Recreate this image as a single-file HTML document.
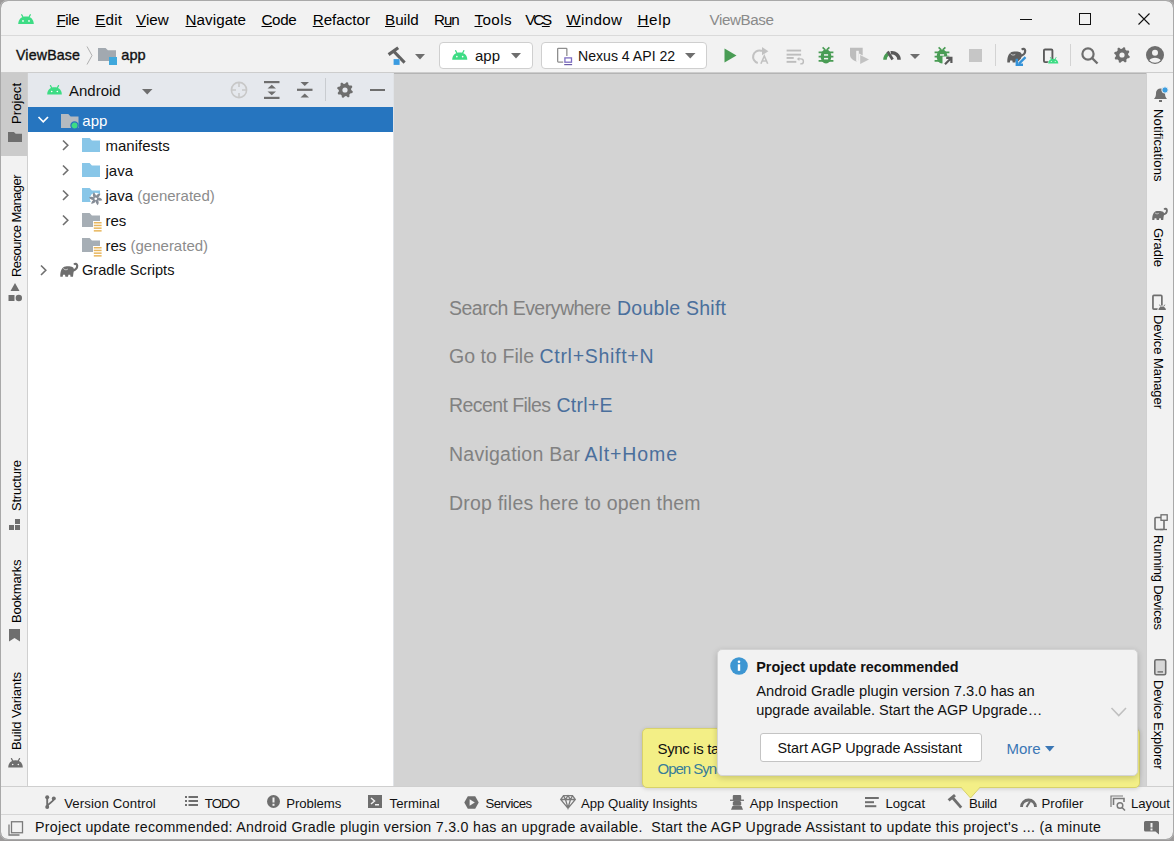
<!DOCTYPE html>
<html><head><meta charset="utf-8">
<style>
*{margin:0;padding:0;box-sizing:border-box}
html,body{width:1174px;height:841px;overflow:hidden;background:#9c9a9a}
body{font-family:"Liberation Sans",sans-serif;color:#000;position:relative}
.a{position:absolute}
.t{position:absolute;white-space:nowrap;line-height:1}
svg{position:absolute;overflow:visible}
#win{position:absolute;left:0;top:0;width:1174px;height:840px;background:#f2f2f2;border-radius:8px;overflow:hidden;box-shadow:inset 0 0 0 1px #a9a9a9}
u{text-decoration:underline;text-decoration-thickness:1px;text-underline-offset:1px}
</style></head><body>
<div id="win">
<div class="a" style="left:0px;top:35px;width:1174px;height:1px;background:#dadada;"></div>
<svg style="left:18px;top:14px" width="16" height="10.0" viewBox="0 0 16 10"><path d="M0.2 10 C0.4 4.9 3.6 2.5 8 2.5 C12.4 2.5 15.6 4.9 15.8 10 Z" fill="#3ddc84"/><path d="M3.7 0.7 L5.3 3.6 M12.3 0.7 L10.7 3.6" stroke="#3ddc84" stroke-width="1.3" stroke-linecap="round"/><circle cx="5" cy="6.9" r="0.85" fill="#fff"/><circle cx="11" cy="6.9" r="0.85" fill="#fff"/></svg>
<div class="t" style="left:56.400000000000006px;top:11.93px;font-size:15.2px;color:#000;font-weight:normal;letter-spacing:-0.391px;"><u>F</u>ile</div>
<div class="t" style="left:95.2px;top:11.93px;font-size:15.2px;color:#000;font-weight:normal;letter-spacing:0.210px;"><u>E</u>dit</div>
<div class="t" style="left:136.1px;top:11.93px;font-size:15.2px;color:#000;font-weight:normal;letter-spacing:0.019px;"><u>V</u>iew</div>
<div class="t" style="left:185.5px;top:11.93px;font-size:15.2px;color:#000;font-weight:normal;letter-spacing:0.080px;"><u>N</u>avigate</div>
<div class="t" style="left:261.5px;top:11.93px;font-size:15.2px;color:#000;font-weight:normal;letter-spacing:-0.369px;"><u>C</u>ode</div>
<div class="t" style="left:312.7px;top:11.93px;font-size:15.2px;color:#000;font-weight:normal;letter-spacing:0.000px;"><u>R</u>efactor</div>
<div class="t" style="left:385.0px;top:11.93px;font-size:15.2px;color:#000;font-weight:normal;letter-spacing:-0.018px;"><u>B</u>uild</div>
<div class="t" style="left:434.0px;top:11.93px;font-size:15.2px;color:#000;font-weight:normal;letter-spacing:-1.031px;">R<u>u</u>n</div>
<div class="t" style="left:474.5px;top:11.93px;font-size:15.2px;color:#000;font-weight:normal;letter-spacing:0.387px;"><u>T</u>ools</div>
<div class="t" style="left:525.3000000000001px;top:11.93px;font-size:15.2px;color:#000;font-weight:normal;letter-spacing:-2.264px;">VC<u>S</u></div>
<div class="t" style="left:566.3000000000001px;top:11.93px;font-size:15.2px;color:#000;font-weight:normal;letter-spacing:0.317px;"><u>W</u>indow</div>
<div class="t" style="left:637.4000000000001px;top:11.93px;font-size:15.2px;color:#000;font-weight:normal;letter-spacing:0.722px;"><u>H</u>elp</div>
<div class="t" style="left:709.5px;top:11.93px;font-size:15.2px;color:#8a8a8a;font-weight:normal;letter-spacing:-0.394px;">ViewBase</div>
<div class="a" style="left:1020px;top:19px;width:12px;height:1px;background:#111;"></div>
<div class="a" style="left:1079px;top:13px;width:12px;height:12px;border:1px solid #111"></div>
<svg style="left:1138px;top:13px" width="12" height="12" viewBox="0 0 12 12"><path d="M0.5 0.5 L11.5 11.5 M11.5 0.5 L0.5 11.5" stroke="#111" stroke-width="1.1"/></svg>
<div class="a" style="left:0px;top:72px;width:1174px;height:1px;background:#cdcdcd;"></div>
<div class="t" style="left:16px;top:48.48px;font-size:14.2px;color:#111;font-weight:normal;letter-spacing:0.167px;-webkit-text-stroke:0.35px #111;">ViewBase</div>
<svg style="left:86px;top:46px" width="7" height="19" viewBox="0 0 7 19"><path d="M1 0.5 L6 9.5 L1 18.5" fill="none" stroke="#b0b0b0" stroke-width="1"/></svg>
<svg style="left:98px;top:47.5px" width="18" height="13" viewBox="0 0 18 13"><path d="M0 0 H7.6 L9.9 2.3 H18 V13 H0 Z" fill="#a2a9b0"/></svg>
<div class="a" style="left:109px;top:57px;width:8px;height:8px;background:#40a8dc;"></div>
<div class="t" style="left:121.3px;top:48.14px;font-size:14.6px;color:#111;font-weight:normal;letter-spacing:0.000px;-webkit-text-stroke:0.35px #111;">app</div>
<svg style="left:387px;top:46px" width="19" height="19" viewBox="0 0 19 19"><path d="M1.6 8.6 L11.2 1.8" stroke="#616161" stroke-width="3.2"/><path d="M6.8 5.4 L17.6 16.6" stroke="#616161" stroke-width="3"/><rect x="6.2" y="12.9" width="6.5" height="6" fill="#f2f2f2"/><rect x="6.6" y="13.1" width="6" height="5.8" fill="#3a9be0"/></svg>
<svg style="left:415px;top:53.5px" width="10" height="5.5" viewBox="0 0 10 5.5"><path d="M0 0 H10 L5.0 5.5 Z" fill="#6e6e6e"/></svg>
<div class="a" style="left:439px;top:42px;width:94px;height:27px;background:#fff;border:1px solid #cfcfcf;border-radius:4px"></div>
<svg style="left:452px;top:50px" width="15.5" height="9.6875" viewBox="0 0 16 10"><path d="M0.2 10 C0.4 4.9 3.6 2.5 8 2.5 C12.4 2.5 15.6 4.9 15.8 10 Z" fill="#3ddc84"/><path d="M3.7 0.7 L5.3 3.6 M12.3 0.7 L10.7 3.6" stroke="#3ddc84" stroke-width="1.3" stroke-linecap="round"/><circle cx="5" cy="6.9" r="0.85" fill="#fff"/><circle cx="11" cy="6.9" r="0.85" fill="#fff"/></svg>
<div class="t" style="left:475px;top:47.80px;font-size:15px;color:#111;font-weight:normal;letter-spacing:0.000px;">app</div>
<svg style="left:511px;top:52.5px" width="10" height="5.5" viewBox="0 0 10 5.5"><path d="M0 0 H10 L5.0 5.5 Z" fill="#6e6e6e"/></svg>
<div class="a" style="left:541px;top:42px;width:166px;height:27px;background:#fff;border:1px solid #cfcfcf;border-radius:4px"></div>
<svg style="left:556px;top:47px" width="17" height="18" viewBox="0 0 17 18"><rect x="1.65" y="1.3" width="9.2" height="13.8" rx="0.8" fill="none" stroke="#8e8e8e" stroke-width="1.3"/><rect x="7.2" y="9" width="10" height="9" fill="#ffffff"/><rect x="8.9" y="10.9" width="6.6" height="4.3" fill="#ffffff" stroke="#7d6dc2" stroke-width="1.3"/><rect x="8.2" y="17" width="7.9" height="1.2" fill="#6b5ca8"/></svg>
<div class="t" style="left:578px;top:48.56px;font-size:14.1px;color:#111;font-weight:normal;letter-spacing:0.000px;">Nexus 4 API 22</div>
<svg style="left:684.5px;top:52.5px" width="10.5" height="5.5" viewBox="0 0 10.5 5.5"><path d="M0 0 H10.5 L5.25 5.5 Z" fill="#6e6e6e"/></svg>
<svg style="left:724px;top:48px" width="13" height="15" viewBox="0 0 13 15"><path d="M0.5 0.5 L12.5 7.5 L0.5 14.5 Z" fill="#499c54"/></svg>
<svg style="left:751px;top:47px" width="18" height="18" viewBox="0 0 18 18"><path d="M6.8 15.9 A6.3 6.3 0 0 1 10 3.7 H11.5" fill="none" stroke="#c2c2c2" stroke-width="2.1"/><path d="M11 0.1 L17.4 4.2 L11 8.2 Z" fill="#c2c2c2"/><path d="M9.9 16.8 L13.3 9 L16.7 16.8 M11.3 14 H15.3" fill="none" stroke="#c2c2c2" stroke-width="1.6"/></svg>
<svg style="left:786px;top:48.5px" width="19" height="16" viewBox="0 0 19 16"><rect x="0.6" y="0.6" width="14.5" height="1.9" fill="#bdbdbd"/><rect x="0.6" y="4.7" width="14.5" height="1.9" fill="#bdbdbd"/><rect x="0.6" y="8" width="7.1" height="1.9" fill="#bdbdbd"/><rect x="0.6" y="11.9" width="9.7" height="1.9" fill="#bdbdbd"/><path d="M12.6 9.9 H14.9 A2.5 2.5 0 0 1 14.9 14.9 H14.2" fill="none" stroke="#bdbdbd" stroke-width="1.4"/><path d="M10.8 9.9 L13.4 7.9 V11.9 Z" fill="#bdbdbd"/></svg>
<svg style="left:818px;top:47px" width="16" height="17" viewBox="0 0 16 17"><path d="M4.6 0.4 L7 2.6 M11.4 0.4 L9 2.6" stroke="#499c54" stroke-width="1.6"/><ellipse cx="8" cy="9.4" rx="5.3" ry="7.1" fill="#499c54"/><path d="M0.6 5.4 H15.4 M0.6 9.7 H15.4 M0.6 13.8 H15.4" stroke="#499c54" stroke-width="1.8"/><rect x="6" y="7.2" width="4.1" height="1.5" fill="#f2f2f2"/><rect x="6" y="10.9" width="4.1" height="1.5" fill="#f2f2f2"/></svg>
<svg style="left:849px;top:47px" width="20" height="17" viewBox="0 0 20 17"><path d="M1 0.7 H13.7 V8 C13.7 11 10.5 13.5 7.3 14.4 C4 13.5 1 11 1 8 Z" fill="#bdbdbd"/><rect x="7.2" y="3.8" width="2.6" height="10.5" fill="#f2f2f2"/><path d="M10 6.6 L21.5 12.5 L10 18.5 Z" fill="#f2f2f2"/><path d="M11.2 7.9 L20 12.5 L11.2 17 Z" fill="#c2c2c2"/></svg>
<svg style="left:882px;top:48px" width="20" height="12" viewBox="0 0 20 12"><path d="M2.95 11.8 A7.05 7.05 0 0 1 5.96 5.92" fill="none" stroke="#499c54" stroke-width="3.5"/><path d="M8.78 4.76 A7.05 7.05 0 0 1 17.05 11.8" fill="none" stroke="#5a5a5a" stroke-width="3.5"/><path d="M5.6 3.6 L10.6 11.4" stroke="#5a5a5a" stroke-width="2.8"/></svg>
<svg style="left:910px;top:53.8px" width="10" height="5" viewBox="0 0 10 5"><path d="M0 0 H10 L5.0 5 Z" fill="#6e6e6e"/></svg>
<svg style="left:933.5px;top:46.8px" width="19" height="18" viewBox="0 0 19 18"><path d="M4.6 0.4 L7 2.6 M11.4 0.4 L9 2.6" stroke="#499c54" stroke-width="1.6"/><ellipse cx="8" cy="9.4" rx="5.3" ry="7.1" fill="#499c54"/><path d="M0.6 5.4 H15.4 M0.6 9.7 H15.4 M0.6 13.8 H15.4" stroke="#499c54" stroke-width="1.8"/><rect x="6" y="7.2" width="4.1" height="1.5" fill="#f2f2f2"/><path d="M8.5 9.5 H19.5 V19 H8.5 Z" fill="#f2f2f2"/><path d="M11 17.2 L17 11.2 M12.2 10.8 H17.4 V16" fill="none" stroke="#5a5a5a" stroke-width="2.2"/></svg>
<div class="a" style="left:969px;top:49px;width:12.5px;height:12.5px;background:#c6c6c6;"></div>
<div class="a" style="left:995px;top:44px;width:1px;height:22px;background:#d3d3d3;"></div>
<svg style="left:1006.5px;top:48px" width="19" height="14.777777777777779" viewBox="0 0 18 14"><path d="M0.3 13.8 C0 8.5 1.8 4 5.5 3.5 C8 3.2 11 3.3 12.8 4.2 C13.8 4.8 14 6 13.8 8 L13.3 11 L13 13.8 L10.5 13.8 L10.2 11.8 L8.4 11.8 L8 13.8 L5.4 13.8 L5 11.8 L3 11.8 L2.7 13.8 Z" fill="#5f5f5f"/><path d="M12.5 7.6 C15.5 7.1 17.4 4.9 17.2 2.5 C17 0.6 15.2 0.2 14.1 1.7" fill="none" stroke="#5f5f5f" stroke-width="2.2"/><path d="M3.4 5.4 C4.4 6.9 6.4 7.1 7.8 6.1" fill="none" stroke="#f2f2f2" stroke-width="0.9" opacity="0.75"/></svg>
<svg style="left:1015px;top:56px" width="12" height="10" viewBox="0 0 12 10"><path d="M10.5 1 L3.5 8" stroke="#f2f2f2" stroke-width="4"/><path d="M10.5 1.2 L3.8 7.8" stroke="#3592d8" stroke-width="2.4"/><path d="M1.8 2.8 V8.8 H8" fill="none" stroke="#3592d8" stroke-width="2.4"/></svg>
<svg style="left:1042.5px;top:47.5px" width="16" height="17" viewBox="0 0 17 17"><rect x="1" y="1" width="9" height="13.5" rx="1.2" fill="none" stroke="#5a5a5a" stroke-width="2"/><path d="M4.6 17 C4.8 13.3 7.2 11.3 10.5 11.3 C13.8 11.3 16.2 13.3 16.4 17 Z" fill="#f2f2f2"/></svg>
<svg style="left:1047.5px;top:57px" width="10.5" height="6.5625" viewBox="0 0 16 10"><path d="M0.2 10 C0.4 4.9 3.6 2.5 8 2.5 C12.4 2.5 15.6 4.9 15.8 10 Z" fill="#3ddc84"/><path d="M3.7 0.7 L5.3 3.6 M12.3 0.7 L10.7 3.6" stroke="#3ddc84" stroke-width="1.3" stroke-linecap="round"/><circle cx="5" cy="6.9" r="0.85" fill="#fff"/><circle cx="11" cy="6.9" r="0.85" fill="#fff"/></svg>
<div class="a" style="left:1069.5px;top:44px;width:1px;height:22px;background:#d3d3d3;"></div>
<svg style="left:1081px;top:47px" width="18" height="17" viewBox="0 0 18 17"><circle cx="7" cy="7" r="5.6" fill="none" stroke="#6e6e6e" stroke-width="2.2"/><path d="M11 11 L16.5 16.5" stroke="#6e6e6e" stroke-width="2.4"/></svg>
<svg style="left:1114px;top:47px" width="16" height="16" viewBox="0 0 16 16"><polygon points="8.00,1.80 9.56,0.15 11.06,0.61 11.44,2.84 12.38,3.62 14.65,3.56 15.39,4.94 14.08,6.79 14.20,8.00 15.85,9.56 15.39,11.06 13.16,11.44 12.38,12.38 12.44,14.65 11.06,15.39 9.21,14.08 8.00,14.20 6.44,15.85 4.94,15.39 4.56,13.16 3.62,12.38 1.35,12.44 0.61,11.06 1.92,9.21 1.80,8.00 0.15,6.44 0.61,4.94 2.84,4.56 3.62,3.62 3.56,1.35 4.94,0.61 6.79,1.92" fill="#6e6e6e"/><circle cx="8" cy="8" r="2.6" fill="#f2f2f2"/></svg>
<svg style="left:1146px;top:46px" width="18" height="18" viewBox="0 0 18 18"><circle cx="9" cy="9" r="9" fill="#6e6e6e"/><circle cx="9" cy="6.8" r="3" fill="#f2f2f2"/><path d="M3.3 14.2 C5 10.8 13 10.8 14.7 14.2 A7.6 7.6 0 0 1 3.3 14.2 Z" fill="#f2f2f2"/></svg>
<div class="a" style="left:27px;top:73px;width:1px;height:713px;background:#d0d0d0;"></div>
<div class="a" style="left:0px;top:73px;width:27px;height:83px;background:#cbcbcb;"></div>
<div class="t" style="left:9.5px;top:124px;font-size:13px;color:#000;letter-spacing:0.090px;transform-origin:0 0;transform:rotate(-90deg)">Project</div>
<svg style="left:8px;top:131.5px" width="14" height="10" viewBox="0 0 14 10"><path d="M0 0 H5.9 L7.7 1.8 H14 V10 H0 Z" fill="#6e6e6e"/></svg>
<div class="t" style="left:9.5px;top:276.5px;font-size:13px;color:#000;letter-spacing:-0.537px;transform-origin:0 0;transform:rotate(-90deg)">Resource Manager</div>
<svg style="left:8px;top:283px" width="14" height="20" viewBox="0 0 14 20"><path d="M7 0 L11.5 8 H2.5 Z" fill="#6e6e6e"/><rect x="0.5" y="12" width="6" height="6" fill="#6e6e6e"/><circle cx="10.8" cy="15" r="3.2" fill="#6e6e6e"/></svg>
<div class="t" style="left:9.5px;top:511px;font-size:13px;color:#000;letter-spacing:-0.218px;transform-origin:0 0;transform:rotate(-90deg)">Structure</div>
<svg style="left:8px;top:518.5px" width="14" height="12" viewBox="0 0 14 12"><rect x="7" y="0" width="5" height="5" fill="#6e6e6e"/><rect x="1" y="6" width="5" height="5" fill="#6e6e6e"/><rect x="7" y="6" width="5" height="5" fill="#6e6e6e"/></svg>
<div class="t" style="left:9.5px;top:623px;font-size:13px;color:#000;letter-spacing:-0.190px;transform-origin:0 0;transform:rotate(-90deg)">Bookmarks</div>
<svg style="left:9px;top:629px" width="12" height="13" viewBox="0 0 12 13"><path d="M0 0 H11 V12.5 L5.5 9 L0 12.5 Z" fill="#6e6e6e"/></svg>
<div class="t" style="left:9.5px;top:750px;font-size:13px;color:#000;letter-spacing:-0.096px;transform-origin:0 0;transform:rotate(-90deg)">Build Variants</div>
<svg style="left:8px;top:758px" width="15" height="9.375" viewBox="0 0 16 10"><path d="M0.2 10 C0.4 4.9 3.6 2.5 8 2.5 C12.4 2.5 15.6 4.9 15.8 10 Z" fill="#6e6e6e"/><path d="M3.7 0.7 L5.3 3.6 M12.3 0.7 L10.7 3.6" stroke="#6e6e6e" stroke-width="1.3" stroke-linecap="round"/><circle cx="5" cy="6.9" r="0.85" fill="#f2f2f2"/><circle cx="11" cy="6.9" r="0.85" fill="#f2f2f2"/></svg>
<div class="a" style="left:28px;top:73px;width:365px;height:34px;background:#e5e8ed;"></div>
<div class="a" style="left:28px;top:107px;width:365px;height:679px;background:#ffffff;"></div>
<svg style="left:46.5px;top:85px" width="15" height="9.375" viewBox="0 0 16 10"><path d="M0.2 10 C0.4 4.9 3.6 2.5 8 2.5 C12.4 2.5 15.6 4.9 15.8 10 Z" fill="#3ddc84"/><path d="M3.7 0.7 L5.3 3.6 M12.3 0.7 L10.7 3.6" stroke="#3ddc84" stroke-width="1.3" stroke-linecap="round"/><circle cx="5" cy="6.9" r="0.85" fill="#fff"/><circle cx="11" cy="6.9" r="0.85" fill="#fff"/></svg>
<div class="t" style="left:69px;top:83.10px;font-size:15px;color:#111;font-weight:normal;letter-spacing:0.000px;">Android</div>
<svg style="left:142px;top:88.8px" width="10.5" height="5.5" viewBox="0 0 10.5 5.5"><path d="M0 0 H10.5 L5.25 5.5 Z" fill="#6e6e6e"/></svg>
<svg style="left:230px;top:81px" width="18" height="18" viewBox="0 0 18 18"><circle cx="9" cy="9" r="7.6" fill="none" stroke="#c8c8c8" stroke-width="1.6"/><path d="M9 1 V6 M9 12 V17 M1 9 H6 M12 9 H17" stroke="#c8c8c8" stroke-width="1.6"/></svg>
<svg style="left:263.5px;top:81px" width="15.5" height="18" viewBox="0 0 15.5 18"><rect x="0" y="0" width="15.5" height="2.2" fill="#6e6e6e"/><rect x="0" y="15.8" width="15.5" height="2.2" fill="#6e6e6e"/><path d="M3.5 7.5 L7.75 3.8 L12 7.5 Z M3.5 10.5 L7.75 14.2 L12 10.5 Z" fill="#6e6e6e"/></svg>
<svg style="left:296.5px;top:82px" width="15.5" height="15.5" viewBox="0 0 15.5 15.5"><path d="M3.5 0 L7.75 4 L12 0 Z M3.5 15.5 L7.75 11.5 L12 15.5 Z" fill="#6e6e6e"/><rect x="0" y="6.7" width="15.5" height="2.2" fill="#6e6e6e"/></svg>
<div class="a" style="left:324.5px;top:78px;width:1px;height:23px;background:#c9ccd0;"></div>
<svg style="left:337px;top:82px" width="16" height="16" viewBox="0 0 16 16"><polygon points="8.00,1.80 9.56,0.15 11.06,0.61 11.44,2.84 12.38,3.62 14.65,3.56 15.39,4.94 14.08,6.79 14.20,8.00 15.85,9.56 15.39,11.06 13.16,11.44 12.38,12.38 12.44,14.65 11.06,15.39 9.21,14.08 8.00,14.20 6.44,15.85 4.94,15.39 4.56,13.16 3.62,12.38 1.35,12.44 0.61,11.06 1.92,9.21 1.80,8.00 0.15,6.44 0.61,4.94 2.84,4.56 3.62,3.62 3.56,1.35 4.94,0.61 6.79,1.92" fill="#6e6e6e"/><circle cx="8" cy="8" r="2.6" fill="#e5e8ed"/></svg>
<div class="a" style="left:369.5px;top:89px;width:15px;height:2.4px;background:#6e6e6e;"></div>
<div class="a" style="left:28px;top:107px;width:365px;height:25px;background:#2675bf;"></div>
<svg style="left:38px;top:116px" width="10.5" height="6.3" viewBox="0 0 10.5 6.3"><path d="M0.5 1 L5.25 5.8 L10.0 1" fill="none" stroke="#ffffff" stroke-width="1.7"/></svg>
<svg style="left:60.5px;top:114px" width="17.5" height="14" viewBox="0 0 17.5 14"><path d="M0 0 H7.3 L9.6 2.5 H17.5 V14 H0 Z" fill="#b4bac0"/></svg>
<svg style="left:70px;top:120.5px" width="9" height="9" viewBox="0 0 9 9"><circle cx="4.5" cy="4.5" r="3.6" fill="#3ddc84" stroke="#2675bf" stroke-width="1.2"/></svg>
<div class="t" style="left:82.3px;top:112.50px;font-size:15px;color:#ffffff;font-weight:normal;letter-spacing:0.000px;">app</div>
<svg style="left:62px;top:139.5px" width="6.3" height="10.5" viewBox="0 0 6.3 10.5"><path d="M1 0.5 L5.8 5.25 L1 10.0" fill="none" stroke="#707070" stroke-width="1.6"/></svg>
<svg style="left:82px;top:137.5px" width="18" height="14" viewBox="0 0 18 14"><path d="M0 0 H7.6 L9.9 2.5 H18 V14 H0 Z" fill="#88c6e8"/></svg>
<div class="t" style="left:105.5px;top:138.00px;font-size:15px;color:#111;font-weight:normal;letter-spacing:0.000px;">manifests</div>
<svg style="left:62px;top:164.5px" width="6.3" height="10.5" viewBox="0 0 6.3 10.5"><path d="M1 0.5 L5.8 5.25 L1 10.0" fill="none" stroke="#707070" stroke-width="1.6"/></svg>
<svg style="left:82px;top:162.5px" width="18" height="14" viewBox="0 0 18 14"><path d="M0 0 H7.6 L9.9 2.5 H18 V14 H0 Z" fill="#88c6e8"/></svg>
<div class="t" style="left:105.5px;top:163.00px;font-size:15px;color:#111;font-weight:normal;letter-spacing:0.000px;">java</div>
<svg style="left:62px;top:189.5px" width="6.3" height="10.5" viewBox="0 0 6.3 10.5"><path d="M1 0.5 L5.8 5.25 L1 10.0" fill="none" stroke="#707070" stroke-width="1.6"/></svg>
<svg style="left:82px;top:187.5px" width="18" height="14" viewBox="0 0 18 14"><path d="M0 0 H7.6 L9.9 2.5 H18 V14 H0 Z" fill="#88c6e8"/></svg>
<svg style="left:89.8px;top:192.5px" width="11.5" height="11.5" viewBox="0 0 11.5 11.5"><circle cx="5.75" cy="5.75" r="5.9" fill="#ffffff"/><g transform="translate(5.75 5.75)"><path transform="rotate(0)" d="M-0.2 -1.6 C0.2 -3.8 2.2 -5.3 4.6 -4.9 C4.2 -3.3 3.4 -1.6 1.6 -0.4 Z" fill="#858c96"/><path transform="rotate(60)" d="M-0.2 -1.6 C0.2 -3.8 2.2 -5.3 4.6 -4.9 C4.2 -3.3 3.4 -1.6 1.6 -0.4 Z" fill="#858c96"/><path transform="rotate(120)" d="M-0.2 -1.6 C0.2 -3.8 2.2 -5.3 4.6 -4.9 C4.2 -3.3 3.4 -1.6 1.6 -0.4 Z" fill="#858c96"/><path transform="rotate(180)" d="M-0.2 -1.6 C0.2 -3.8 2.2 -5.3 4.6 -4.9 C4.2 -3.3 3.4 -1.6 1.6 -0.4 Z" fill="#858c96"/><path transform="rotate(240)" d="M-0.2 -1.6 C0.2 -3.8 2.2 -5.3 4.6 -4.9 C4.2 -3.3 3.4 -1.6 1.6 -0.4 Z" fill="#858c96"/><path transform="rotate(300)" d="M-0.2 -1.6 C0.2 -3.8 2.2 -5.3 4.6 -4.9 C4.2 -3.3 3.4 -1.6 1.6 -0.4 Z" fill="#858c96"/></g></svg>
<div class="t" style="left:105.5px;top:188.00px;font-size:15px;color:#111;font-weight:normal;letter-spacing:0.000px;">java<span style="color:#8c8c8c"> (generated)</span></div>
<svg style="left:62px;top:214.5px" width="6.3" height="10.5" viewBox="0 0 6.3 10.5"><path d="M1 0.5 L5.8 5.25 L1 10.0" fill="none" stroke="#707070" stroke-width="1.6"/></svg>
<svg style="left:82px;top:212.5px" width="18" height="14" viewBox="0 0 18 14"><path d="M0 0 H7.6 L9.9 2.5 H18 V14 H0 Z" fill="#a6aeb5"/></svg>
<svg style="left:92.5px;top:220.5px" width="9" height="11" viewBox="0 0 9 11"><rect x="0" y="0" width="9" height="11" fill="#ffffff"/><rect x="0.8" y="1" width="7.8" height="1.5" fill="#e8b65c"/><rect x="0.8" y="3.7" width="7.8" height="1.5" fill="#e8b65c"/><rect x="0.8" y="6.4" width="7.8" height="1.5" fill="#e8b65c"/><rect x="0.8" y="9.1" width="7.8" height="1.5" fill="#e8b65c"/></svg>
<div class="t" style="left:105.5px;top:213.00px;font-size:15px;color:#111;font-weight:normal;letter-spacing:0.000px;">res</div>
<svg style="left:82px;top:237.5px" width="18" height="14" viewBox="0 0 18 14"><path d="M0 0 H7.6 L9.9 2.5 H18 V14 H0 Z" fill="#a6aeb5"/></svg>
<svg style="left:92.5px;top:245.5px" width="9" height="11" viewBox="0 0 9 11"><rect x="0" y="0" width="9" height="11" fill="#ffffff"/><rect x="0.8" y="1" width="7.8" height="1.5" fill="#e8b65c"/><rect x="0.8" y="3.7" width="7.8" height="1.5" fill="#e8b65c"/><rect x="0.8" y="6.4" width="7.8" height="1.5" fill="#e8b65c"/><rect x="0.8" y="9.1" width="7.8" height="1.5" fill="#e8b65c"/></svg>
<div class="t" style="left:105.5px;top:238.00px;font-size:15px;color:#111;font-weight:normal;letter-spacing:0.000px;">res<span style="color:#8c8c8c"> (generated)</span></div>
<svg style="left:39.5px;top:264.5px" width="6.3" height="10.5" viewBox="0 0 6.3 10.5"><path d="M1 0.5 L5.8 5.25 L1 10.0" fill="none" stroke="#707070" stroke-width="1.6"/></svg>
<svg style="left:60px;top:263px" width="18" height="14.0" viewBox="0 0 18 14"><path d="M0.3 13.8 C0 8.5 1.8 4 5.5 3.5 C8 3.2 11 3.3 12.8 4.2 C13.8 4.8 14 6 13.8 8 L13.3 11 L13 13.8 L10.5 13.8 L10.2 11.8 L8.4 11.8 L8 13.8 L5.4 13.8 L5 11.8 L3 11.8 L2.7 13.8 Z" fill="#6e6e6e"/><path d="M12.5 7.6 C15.5 7.1 17.4 4.9 17.2 2.5 C17 0.6 15.2 0.2 14.1 1.7" fill="none" stroke="#6e6e6e" stroke-width="2.2"/><path d="M3.4 5.4 C4.4 6.9 6.4 7.1 7.8 6.1" fill="none" stroke="#ffffff" stroke-width="0.9" opacity="0.75"/></svg>
<div class="t" style="left:82px;top:263.34px;font-size:14.6px;color:#111;font-weight:normal;letter-spacing:0.000px;">Gradle Scripts</div>
<div class="a" style="left:393px;top:73px;width:754px;height:713px;background:#d3d3d3;"></div>
<div class="a" style="left:393px;top:73px;width:754px;height:1px;background:#b4b4b4;"></div>
<div class="a" style="left:393px;top:73px;width:1px;height:713px;background:#e0e3e7;"></div>
<div class="t" style="left:449px;top:298.69px;font-size:19.5px;color:#818181;font-weight:normal;letter-spacing:-0.510px;">Search Everywhere</div>
<div class="t" style="left:617px;top:298.69px;font-size:19.5px;color:#4a6f9c;font-weight:normal;letter-spacing:0.252px;">Double Shift</div>
<div class="t" style="left:449px;top:347.39px;font-size:19.5px;color:#818181;font-weight:normal;letter-spacing:0.052px;">Go to File</div>
<div class="t" style="left:539.5px;top:347.39px;font-size:19.5px;color:#4a6f9c;font-weight:normal;letter-spacing:0.709px;">Ctrl+Shift+N</div>
<div class="t" style="left:449px;top:396.49px;font-size:19.5px;color:#818181;font-weight:normal;letter-spacing:-0.579px;">Recent Files</div>
<div class="t" style="left:556.5px;top:396.49px;font-size:19.5px;color:#4a6f9c;font-weight:normal;letter-spacing:0.256px;">Ctrl+E</div>
<div class="t" style="left:449px;top:444.59px;font-size:19.5px;color:#818181;font-weight:normal;letter-spacing:0.238px;">Navigation Bar</div>
<div class="t" style="left:584.6px;top:444.59px;font-size:19.5px;color:#4a6f9c;font-weight:normal;letter-spacing:0.906px;">Alt+Home</div>
<div class="t" style="left:449px;top:493.89px;font-size:19.5px;color:#818181;font-weight:normal;letter-spacing:0.202px;">Drop files here to open them</div>
<div class="a" style="left:1146px;top:73px;width:1px;height:713px;background:#d0d0d0;"></div>
<svg style="left:1153px;top:86.5px" width="15" height="16" viewBox="0 0 15 16"><path d="M1 12 C2.5 10 3 9 3 6 A4.5 4.5 0 0 1 12 6 C12 9 12.5 10 14 12 Z" fill="#6e6e6e"/><rect x="6" y="13" width="3" height="2" fill="#6e6e6e"/><circle cx="12" cy="3" r="3.2" fill="#3c9ee0" stroke="#f2f2f2" stroke-width="1"/></svg>
<div class="t" style="left:1164.5px;top:108.7px;font-size:13px;color:#000;letter-spacing:0.141px;transform-origin:0 0;transform:rotate(90deg)">Notifications</div>
<svg style="left:1152px;top:208px" width="15.6" height="12.133333333333333" viewBox="0 0 18 14"><path d="M0.3 13.8 C0 8.5 1.8 4 5.5 3.5 C8 3.2 11 3.3 12.8 4.2 C13.8 4.8 14 6 13.8 8 L13.3 11 L13 13.8 L10.5 13.8 L10.2 11.8 L8.4 11.8 L8 13.8 L5.4 13.8 L5 11.8 L3 11.8 L2.7 13.8 Z" fill="#6e6e6e"/><path d="M12.5 7.6 C15.5 7.1 17.4 4.9 17.2 2.5 C17 0.6 15.2 0.2 14.1 1.7" fill="none" stroke="#6e6e6e" stroke-width="2.2"/><path d="M3.4 5.4 C4.4 6.9 6.4 7.1 7.8 6.1" fill="none" stroke="#ffffff" stroke-width="0.9" opacity="0.75"/></svg>
<div class="t" style="left:1164.5px;top:228px;font-size:13px;color:#000;letter-spacing:-0.004px;transform-origin:0 0;transform:rotate(90deg)">Gradle</div>
<svg style="left:1151.5px;top:293.5px" width="16" height="17" viewBox="0 0 17 17"><rect x="1" y="1" width="9.5" height="14.5" rx="1" fill="none" stroke="#6e6e6e" stroke-width="1.8"/><path d="M5.5 17 C5.7 13.5 7.8 11.6 10.8 11.6 C13.8 11.6 15.9 13.5 16.1 17 Z" fill="#f2f2f2"/><path d="M6.8 16.6 C7 14.2 8.6 12.8 10.8 12.8 C13 12.8 14.6 14.2 14.8 16.6 Z" fill="#6e6e6e"/><path d="M8 10.8 L9.2 12.8 M13.6 10.8 L12.4 12.8" stroke="#6e6e6e" stroke-width="1"/></svg>
<div class="t" style="left:1164.5px;top:314.8px;font-size:13px;color:#000;letter-spacing:-0.050px;transform-origin:0 0;transform:rotate(90deg)">Device Manager</div>
<svg style="left:1153.5px;top:513.5px" width="14" height="16.5" viewBox="0 0 14 16.5"><rect x="1" y="3.5" width="9" height="12" rx="1" fill="none" stroke="#6e6e6e" stroke-width="1.6"/><rect x="7" y="0.8" width="6.2" height="5.5" fill="#f2f2f2" stroke="#6e6e6e" stroke-width="1.3"/><path d="M6 15.5 H13" stroke="#6e6e6e" stroke-width="1.3"/></svg>
<div class="t" style="left:1164.5px;top:534.5px;font-size:13px;color:#000;letter-spacing:-0.234px;transform-origin:0 0;transform:rotate(90deg)">Running Devices</div>
<svg style="left:1153.5px;top:658.5px" width="12.5" height="16.5" viewBox="0 0 12.5 16.5"><rect x="0.8" y="0.8" width="10.9" height="14.9" rx="1.5" fill="#d8d8d8" stroke="#6e6e6e" stroke-width="1.6"/><rect x="3.5" y="12.2" width="5.5" height="1.4" fill="#6e6e6e"/></svg>
<div class="t" style="left:1164.5px;top:679.5px;font-size:13px;color:#000;letter-spacing:-0.161px;transform-origin:0 0;transform:rotate(90deg)">Device Explorer</div>
<div class="a" style="left:0px;top:786px;width:1174px;height:1px;background:#cfcfcf;"></div>
<div class="a" style="left:0px;top:814px;width:1174px;height:1px;background:#d6d6d6;"></div>
<svg style="left:44.5px;top:795px" width="11" height="14" viewBox="0 0 11 14"><circle cx="2.2" cy="2.2" r="2" fill="#6e6e6e"/><circle cx="8.8" cy="3.5" r="2" fill="#6e6e6e"/><circle cx="2.2" cy="12" r="2" fill="#6e6e6e"/><path d="M2.2 2.2 V12 M8.8 3.5 C8.8 7.5 2.5 8 2.2 12" fill="none" stroke="#6e6e6e" stroke-width="1.9"/></svg>
<div class="t" style="left:64.2px;top:796.83px;font-size:13.2px;color:#111;font-weight:normal;letter-spacing:0.103px;">Version Control</div>
<svg style="left:184.5px;top:796px" width="13" height="12" viewBox="0 0 13 12"><rect x="0" y="0" width="2" height="2" fill="#6e6e6e"/><rect x="0" y="4" width="2" height="2" fill="#6e6e6e"/><rect x="0" y="8" width="2" height="2" fill="#6e6e6e"/><rect x="3.5" y="0" width="9.5" height="2" fill="#6e6e6e"/><rect x="3.5" y="4" width="9.5" height="2" fill="#6e6e6e"/><rect x="3.5" y="8" width="9.5" height="2" fill="#6e6e6e"/></svg>
<div class="t" style="left:204.7px;top:796.83px;font-size:13.2px;color:#111;font-weight:normal;letter-spacing:-0.852px;">TODO</div>
<svg style="left:267px;top:795px" width="13" height="13" viewBox="0 0 13 13"><circle cx="6.5" cy="6.5" r="6.5" fill="#6e6e6e"/><rect x="5.5" y="2.5" width="2" height="5" fill="#f2f2f2"/><rect x="5.5" y="8.8" width="2" height="2" fill="#f2f2f2"/></svg>
<div class="t" style="left:286.3px;top:796.83px;font-size:13.2px;color:#111;font-weight:normal;letter-spacing:-0.100px;">Problems</div>
<svg style="left:368px;top:795px" width="14" height="13" viewBox="0 0 14 13"><rect x="0" y="0" width="14" height="13" fill="#6e6e6e"/><path d="M3 3 L6.5 6 L3 9" fill="none" stroke="#f2f2f2" stroke-width="1.5"/><rect x="7" y="9" width="4" height="1.5" fill="#f2f2f2"/></svg>
<div class="t" style="left:389.5px;top:796.83px;font-size:13.2px;color:#111;font-weight:normal;letter-spacing:0.053px;">Terminal</div>
<svg style="left:463.5px;top:794.5px" width="15" height="15" viewBox="0 0 15 15"><path d="M0.3 7.5 L3.8 1.2 H11.2 L14.7 7.5 L11.2 13.8 H3.8 Z" fill="#6e6e6e"/><path d="M5.6 4.3 L10.8 7.5 L5.6 10.7 Z" fill="#f2f2f2"/></svg>
<div class="t" style="left:485.6px;top:796.83px;font-size:13.2px;color:#111;font-weight:normal;letter-spacing:-0.581px;">Services</div>
<svg style="left:560px;top:795px" width="16" height="14" viewBox="0 0 16 14"><path d="M3.5 0.7 H12.5 L15.3 4.5 L8 13.3 L0.7 4.5 Z M0.7 4.5 H15.3 M5.5 4.5 L8 13 L10.5 4.5 M3.5 0.7 L5.5 4.5 L8 0.7 L10.5 4.5 L12.5 0.7" fill="none" stroke="#7a7a7a" stroke-width="1.3"/></svg>
<div class="t" style="left:581px;top:796.83px;font-size:13.2px;color:#111;font-weight:normal;letter-spacing:-0.052px;">App Quality Insights</div>
<svg style="left:729.5px;top:795px" width="14" height="15" viewBox="0 0 14 15"><rect x="2.8" y="0" width="8.4" height="5.5" rx="1" fill="#6e6e6e"/><rect x="0" y="4.6" width="14" height="1.3" fill="#6e6e6e"/><rect x="2.8" y="6" width="8.4" height="4.8" rx="1.5" fill="#6e6e6e"/><path d="M2.5 11 H11.5 L13 14.8 H1 Z" fill="#6e6e6e"/></svg>
<div class="t" style="left:749.7px;top:796.83px;font-size:13.2px;color:#111;font-weight:normal;letter-spacing:0.089px;">App Inspection</div>
<svg style="left:864.7px;top:797px" width="14" height="10.5" viewBox="0 0 14 10.5"><rect x="0" y="0" width="13.8" height="2" fill="#6e6e6e"/><rect x="0" y="4.2" width="9" height="2" fill="#6e6e6e"/><rect x="0" y="8.2" width="11.3" height="2" fill="#6e6e6e"/></svg>
<div class="t" style="left:885.4px;top:796.83px;font-size:13.2px;color:#111;font-weight:normal;letter-spacing:0.021px;">Logcat</div>
<svg style="left:947px;top:794px" width="16" height="15" viewBox="0 0 16 15"><path d="M1.6 6.4 L8 1.2" stroke="#6e6e6e" stroke-width="3"/><path d="M5 3 L14.2 13.6" stroke="#6e6e6e" stroke-width="2.8"/></svg>
<div class="t" style="left:968.9px;top:796.83px;font-size:13.2px;color:#111;font-weight:normal;letter-spacing:-0.281px;">Build</div>
<svg style="left:1019.5px;top:797px" width="17" height="11" viewBox="0 0 17 11"><path d="M1.5 10 A7 7 0 0 1 15.5 10" fill="none" stroke="#6e6e6e" stroke-width="2.8"/><path d="M6.5 10 L10 4.5" stroke="#6e6e6e" stroke-width="2"/></svg>
<div class="t" style="left:1041.5px;top:796.83px;font-size:13.2px;color:#111;font-weight:normal;letter-spacing:0.033px;">Profiler</div>
<svg style="left:1109.5px;top:794.5px" width="17" height="16" viewBox="0 0 17 16"><path d="M1 12 V1 H13" fill="none" stroke="#7a7a7a" stroke-width="1.2"/><path d="M3.5 10 V3.5 H14 V7" fill="none" stroke="#7a7a7a" stroke-width="1.6"/><circle cx="10" cy="10.5" r="2.8" fill="none" stroke="#7a7a7a" stroke-width="1.5"/><path d="M12 12.5 L15 15.5" stroke="#7a7a7a" stroke-width="1.6"/></svg>
<div class="t" style="left:1131px;top:796.83px;font-size:13.2px;color:#111;font-weight:normal;letter-spacing:-0.119px;">Layout</div>
<svg style="left:8px;top:821px" width="16" height="15" viewBox="0 0 16 15"><rect x="3.5" y="0.75" width="11" height="11" fill="none" stroke="#7a7a7a" stroke-width="1.3"/><path d="M1 3.5 V14 H11.5" fill="none" stroke="#7a7a7a" stroke-width="1.3"/></svg>
<div class="t" style="left:35px;top:820.28px;font-size:14.2px;color:#111;font-weight:normal;letter-spacing:0.288px;">Project update recommended: Android Gradle plugin version 7.3.0 has an upgrade available.&nbsp; Start the AGP Upgrade Assistant to update this project's ... (a minute</div>
<svg style="left:1143.5px;top:820.5px" width="15" height="14" viewBox="0 0 15 14"><path d="M1.5 0 H13.5 A1.5 1.5 0 0 1 15 1.5 V13.5 L11.5 10.5 H1.5 A1.5 1.5 0 0 1 0 9 V1.5 A1.5 1.5 0 0 1 1.5 0 Z" fill="#6e6e6e"/><rect x="6.5" y="2" width="2" height="4.5" fill="#f2f2f2"/><rect x="6.5" y="7.5" width="2" height="2" fill="#f2f2f2"/></svg>
<div class="a" style="left:642px;top:728px;width:498px;height:60px;background:#f3ef86;border:1px solid #d8d26a;border-radius:5px;box-shadow:0 1px 4px rgba(0,0,0,0.15)"></div>
<svg style="left:960.5px;top:786.5px" width="19" height="12" viewBox="0 0 19 12"><path d="M0 0 L9.5 11 L19 0 Z" fill="#f3ef86"/><path d="M0 0.3 L9.5 11 L19 0.3" fill="none" stroke="#d8d26a" stroke-width="1"/></svg>
<div class="t" style="left:657.5px;top:741.30px;font-size:15px;color:#111;font-weight:normal;letter-spacing:-0.349px;">Sync is taking</div>
<div class="t" style="left:657.5px;top:760.70px;font-size:15px;color:#387d99;font-weight:normal;letter-spacing:-1.026px;">Open Sync</div>
<div class="a" style="left:716.5px;top:648.5px;width:421px;height:127px;background:#f2f2f2;border:1px solid #d4d4d4;border-radius:5px;box-shadow:0 2px 6px rgba(0,0,0,0.18)"></div>
<svg style="left:730px;top:656.8px" width="18" height="18" viewBox="0 0 18 18"><circle cx="9" cy="9" r="8.8" fill="#3d96d2"/><rect x="7.8" y="7.3" width="2.4" height="6.5" fill="#fff"/><circle cx="9" cy="4.8" r="1.3" fill="#fff"/></svg>
<div class="t" style="left:756.2px;top:660.41px;font-size:14.4px;color:#111;font-weight:bold;letter-spacing:0.000px;">Project update recommended</div>
<div class="t" style="left:756.2px;top:683.66px;font-size:14.7px;color:#111;font-weight:normal;letter-spacing:0.000px;">Android Gradle plugin version 7.3.0 has an</div>
<div class="t" style="left:756.2px;top:703.48px;font-size:14.55px;color:#111;font-weight:normal;letter-spacing:0.000px;">upgrade available. Start the AGP Upgrade…</div>
<svg style="left:1110.5px;top:706.5px" width="15.5" height="9.299999999999999" viewBox="0 0 15.5 9.299999999999999"><path d="M0.5 1 L7.75 8.5 L15.0 1" fill="none" stroke="#c0c0c0" stroke-width="1.6"/></svg>
<div class="a" style="left:760px;top:733px;width:222px;height:29px;background:#fff;border:1px solid #c4c4c4;border-radius:3px"></div>
<div class="t" style="left:777.5px;top:741.11px;font-size:14.4px;color:#111;font-weight:normal;letter-spacing:0.000px;">Start AGP Upgrade Assistant</div>
<div class="t" style="left:1006.4px;top:740.60px;font-size:15px;color:#3b77b5;font-weight:normal;letter-spacing:0.000px;">More</div>
<svg style="left:1044.5px;top:746px" width="9.5" height="5.5" viewBox="0 0 9.5 5.5"><path d="M0 0 H9.5 L4.75 5.5 Z" fill="#3b77b5"/></svg>
</div>
<div class="a" style="left:0;top:0;width:1174px;height:840px;border:1px solid #a9a9a9;border-radius:8px;pointer-events:none"></div>
</body></html>
